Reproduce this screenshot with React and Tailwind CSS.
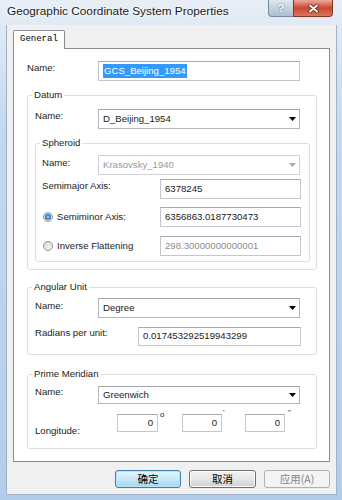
import React from "react";

function Arrow({ disabled }) {
  return (
    <svg width="7" height="4" viewBox="0 0 7 4" className="shrink-0">
      <path d="M0 0H7L3.5 4Z" fill={disabled ? "#a8a8a8" : "#000"} />
    </svg>
  );
}

function Select({ w, h = "h-[20px]", children, disabled }) {
  return (
    <div
      className={`${w} ${h} bg-white border ${disabled ? "border-[#cfd1d6] text-[#9a9a9a]" : "border-[#b3b6bd] border-t-[#a3a6ad]"} flex items-center pl-[4px] pr-[3px]`}
    >
      <span className="flex-1 truncate">{children}</span>
      <Arrow disabled={disabled} />
    </div>
  );
}

function Field({ w, h = "h-[20px]", children, disabled, right }) {
  return (
    <div
      className={`${w} ${h} bg-white border border-[#c3c6cd] border-t-[#a7aab1] flex items-center ${right ? "justify-end pr-[4px]" : "pl-[4px]"} ${disabled ? "text-[#8c8c8c]" : ""}`}
    >
      {children}
    </div>
  );
}

function Radio({ checked }) {
  return (
    <div className="w-[10px] h-[10px] rounded-full border border-[#8f9295] bg-linear-to-br from-[#d8d8d8] to-[#fbfbfb] flex items-center justify-center shrink-0">
      {checked && (
        <div className="w-[6px] h-[6px] rounded-full bg-radial from-[#b9e0ff] via-[#2c7ccb] to-[#144f8c]" />
      )}
    </div>
  );
}

export default function App() {
  return (
    <div className="w-[342px] h-[500px] overflow-hidden flex flex-col bg-linear-to-b from-[#e7eef6] via-[#c4d9f0] via-25% to-[#b2cdeb] font-['Liberation_Sans',Arial,sans-serif] text-[9.6px] text-[#1b1b1b]">
      {/* title bar */}
      <div className="h-[25px] shrink-0 flex items-start pl-[7px]">
        <div className="mt-[4px] text-[11.8px] leading-[15px] text-[#1c1c1c] [text-shadow:0_0_6px_#fff,0_0_3px_#fff]">
          Geographic Coordinate System Properties
        </div>
        <div className="ml-auto mr-[9px] flex">
          <div className="w-[25px] h-[17px] rounded-bl-[4px] border border-t-0 border-r-0 border-[#7a8a9c] bg-linear-to-b from-[#dfe7f0] via-[#c5d2e0] to-[#aebfd1] flex items-center justify-center text-white text-[11px] font-bold leading-none [text-shadow:0_0_2px_#44556a]">
            ?
          </div>
          <div className="w-[40px] h-[17px] rounded-br-[4px] border border-t-0 border-[#8a3327] bg-linear-to-b from-[#eaa899] via-[#c9462f] to-[#d9765f] flex items-center justify-center">
            <svg width="11" height="9" viewBox="0 0 11 9">
              <path d="M2 1.5L9 7.5M9 1.5L2 7.5" stroke="#5b1a10" strokeWidth="3.4" strokeLinecap="round" />
              <path d="M2 1.5L9 7.5M9 1.5L2 7.5" stroke="#fff" strokeWidth="2" strokeLinecap="round" />
            </svg>
          </div>
        </div>
      </div>

      {/* client area */}
      <div className="ml-[6px] mr-[5px] h-[470px] bg-[#f0f0f0] border border-t-0 border-[#9fb2c8] pl-[6px] pr-[6px] pt-[5px]">
        <div className="relative z-10 w-[52px] h-[19px] bg-white border border-b-0 border-[#898c95] rounded-t-[2px] flex items-center pl-[6px] font-['Liberation_Mono',monospace] text-[9px] text-black">
          General
        </div>
        <div className="-mt-px h-[414px] border border-[#898c95] bg-white pt-[12px] pl-[13px] pr-[12px]">
          {/* Name */}
          <div className="flex items-start">
            <span className="w-[71px] mt-[1px] leading-[12px]">Name:</span>
            <Field w="w-[202px]">
              <span className="bg-[#3399ff] text-white leading-[14px] px-[1px]">GCS_Beijing_1954</span>
            </Field>
          </div>

          {/* Datum */}
          <fieldset className="mt-[8px] border border-[#d5dfe5] rounded-[3px] pl-[7px] pr-[6px] pb-[7px]">
            <legend className="-ml-[3px] px-[2px] leading-[12px]">Datum</legend>
            <div className="mt-[8px] flex items-start">
              <span className="w-[63px] mt-[1px] leading-[12px]">Name:</span>
              <Select w="w-[202px]">D_Beijing_1954</Select>
            </div>

            <fieldset className="mt-[8px] border border-[#d5dfe5] rounded-[3px] pl-[6px] pr-[8px] pb-[5px]">
              <legend className="-ml-[2px] px-[2px] leading-[12px]">Spheroid</legend>
              <div className="mt-[6px] flex items-start">
                <span className="w-[56px] mt-[2px] leading-[12px]">Name:</span>
                <Select w="w-[202px]" disabled>
                  Krasovsky_1940
                </Select>
              </div>
              <div className="mt-[4px] flex items-start">
                <span className="w-[118px] mt-[1px] leading-[12px]">Semimajor Axis:</span>
                <Field w="w-[141px]">6378245</Field>
              </div>
              <div className="mt-[8px] flex items-center">
                <div className="w-[118px] flex items-center pl-[1px] gap-[4px]">
                  <Radio checked />
                  <span className="leading-[12px]">Semiminor Axis:</span>
                </div>
                <Field w="w-[141px]">6356863.0187730473</Field>
              </div>
              <div className="mt-[9px] flex items-center">
                <div className="w-[118px] flex items-center pl-[1px] gap-[4px]">
                  <Radio />
                  <span className="leading-[12px]">Inverse Flattening</span>
                </div>
                <Field w="w-[141px]" disabled>
                  298.30000000000001
                </Field>
              </div>
            </fieldset>
          </fieldset>

          {/* Angular Unit */}
          <fieldset className="mt-[11px] border border-[#d5dfe5] rounded-[3px] pl-[7px] pr-[6px] pb-[8px]">
            <legend className="-ml-[3px] px-[2px] leading-[12px]">Angular Unit</legend>
            <div className="mt-[5px] flex items-start">
              <span className="w-[63px] mt-[2px] leading-[12px]">Name:</span>
              <Select w="w-[202px]">Degree</Select>
            </div>
            <div className="mt-[9px] flex items-start">
              <span className="w-[103px] leading-[12px]">Radians per unit:</span>
              <Field w="w-[163px]" h="h-[19px]">0.017453292519943299</Field>
            </div>
          </fieldset>

          {/* Prime Meridian */}
          <fieldset className="mt-[13px] border border-[#d5dfe5] rounded-[3px] pl-[7px] pr-[6px] pb-[11px]">
            <legend className="-ml-[3px] px-[2px] leading-[12px]">Prime Meridian</legend>
            <div className="mt-[6px] flex items-start">
              <span className="w-[63px] leading-[12px]">Name:</span>
              <Select w="w-[202px]" h="h-[18px]">Greenwich</Select>
            </div>
            <div className="mt-[10px] flex items-start">
              <span className="w-[82px] mt-[11px] leading-[12px]">Longitude:</span>
              <Field w="w-[41px]" h="h-[18px]" right>0</Field>
              <span className="w-[24px] -mt-[4px] pl-[2px] text-[8px] leading-[10px]">o</span>
              <Field w="w-[40px]" h="h-[18px]" right>0</Field>
              <span className="w-[23px] -mt-[6px] pl-[1px] text-[8px] leading-[10px]">'</span>
              <Field w="w-[40px]" h="h-[18px]" right>0</Field>
              <span className="-mt-[6px] pl-[3px] text-[8px] leading-[10px]">"</span>
            </div>
          </fieldset>
        </div>

        {/* buttons */}
        <div className="mt-[8px] flex justify-end gap-[8px] font-['Noto_Sans_CJK_SC',sans-serif] text-[10.5px]">
          <div className="w-[66px] h-[18px] rounded-[3px] border border-[#3c7fb1] bg-linear-to-b from-[#e8f6fd] via-[#c6e7f8] to-[#a3d6f1] shadow-[inset_0_0_0_1px_#b7e3f8] flex items-center justify-center text-black leading-none">
            确定
          </div>
          <div className="w-[67px] h-[18px] rounded-[3px] border border-[#707070] bg-linear-to-b from-[#f2f2f2] via-[#e6e6e6] to-[#cfcfcf] shadow-[inset_0_0_0_1px_#fbfbfb] flex items-center justify-center text-black leading-none">
            取消
          </div>
          <div className="w-[66px] h-[18px] rounded-[3px] border border-[#adb2b5] bg-[#f4f4f4] flex items-center justify-center text-[#838383] leading-none">
            应用(A)
          </div>
        </div>
      </div>
    </div>
  );
}
